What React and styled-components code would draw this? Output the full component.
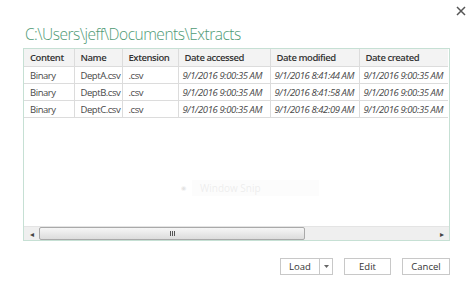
import styled, { createGlobalStyle } from "styled-components";

const GlobalStyle = createGlobalStyle`
  html, body {
    margin: 0;
    padding: 0;
    background: #ffffff;
  }
  body {
    font-family: "Open Sans", "Noto Sans", sans-serif;
    color: #444;
  }
`;

const rows = [
  { content: "Binary", name: "DeptA.csv", ext: ".csv", accessed: "9/1/2016 9:00:35 AM", modified: "9/1/2016 8:41:44 AM", created: "9/1/2016 9:00:35 AM" },
  { content: "Binary", name: "DeptB.csv", ext: ".csv", accessed: "9/1/2016 9:00:35 AM", modified: "9/1/2016 8:41:58 AM", created: "9/1/2016 9:00:35 AM" },
  { content: "Binary", name: "DeptC.csv", ext: ".csv", accessed: "9/1/2016 9:00:35 AM", modified: "9/1/2016 8:42:09 AM", created: "9/1/2016 9:00:35 AM" },
];

const columns = [
  { key: "content", label: "Content", width: 50 },
  { key: "name", label: "Name", width: 48 },
  { key: "ext", label: "Extension", width: 56 },
  { key: "accessed", label: "Date accessed", width: 92, italic: true },
  { key: "modified", label: "Date modified", width: 89, italic: true },
  { key: "created", label: "Date created", width: 89, italic: true },
];

const App = () => {
  return (
    <>
      <GlobalStyle />
      <Dialog>
        <TopBar>
          <CloseButton aria-label="Close">
            <svg width="10" height="10" viewBox="0 0 10 10">
              <path d="M1 1 L9 9 M9 1 L1 9" stroke="#555" strokeWidth="1.5" />
            </svg>
          </CloseButton>
        </TopBar>
        <Title>C:\Users\jeff\Documents\Extracts</Title>
        <Grid>
          <TableArea>
            <Table>
              <colgroup>
                {columns.map((c) => (
                  <col key={c.key} style={{ width: c.width }} />
                ))}
              </colgroup>
              <thead>
                <tr>
                  {columns.map((c) => (
                    <HeadCell key={c.key}>{c.label}</HeadCell>
                  ))}
                </tr>
              </thead>
              <tbody>
                {rows.map((r, i) => (
                  <tr key={i}>
                    {columns.map((c) => (
                      <Cell key={c.key} $italic={c.italic}>
                        {r[c.key]}
                      </Cell>
                    ))}
                  </tr>
                ))}
              </tbody>
            </Table>
            <Snip>
              <SnipIcon>◉</SnipIcon>
              <SnipBox>Window Snip</SnipBox>
            </Snip>
          </TableArea>
          <ScrollBar>
            <Arrow>◂</Arrow>
            <Track>
              <Thumb>
                <Grip />
              </Thumb>
            </Track>
            <Arrow>▸</Arrow>
          </ScrollBar>
        </Grid>
        <Footer>
          <SplitButton>
            <ButtonMain>Load</ButtonMain>
            <ButtonDrop>
              <svg width="5" height="3" viewBox="0 0 5 3">
                <path d="M0 0 L5 0 L2.5 3 Z" fill="#666" />
              </svg>
            </ButtonDrop>
          </SplitButton>
          <Button $w={47}>Edit</Button>
          <Button $w={48}>Cancel</Button>
        </Footer>
      </Dialog>
    </>
  );
};

export default App;

const Dialog = styled.div`
  width: 474px;
  height: 299px;
  box-sizing: border-box;
  padding: 0 24px 0 23px;
  display: flex;
  flex-direction: column;
`;

const TopBar = styled.div`
  height: 22px;
  display: flex;
  justify-content: flex-end;
  align-items: center;
  margin-right: -19px;
`;

const CloseButton = styled.div`
  width: 16px;
  height: 16px;
  display: flex;
  align-items: center;
  justify-content: center;
`;

const Title = styled.div`
  font-family: "Open Sans", sans-serif;
  font-weight: 300;
  font-size: 15.5px;
  line-height: 24px;
  height: 26px;
  color: #4f9a75;
  margin-left: 2px;
  letter-spacing: -0.5px;
  white-space: nowrap;
`;

const Grid = styled.div`
  width: 427px;
  height: 193px;
  box-sizing: border-box;
  border: 1px solid #c6e0d4;
  display: flex;
  flex-direction: column;
`;

const TableArea = styled.div`
  flex: 1;
  position: relative;
  overflow: hidden;
`;

const Table = styled.table`
  border-collapse: collapse;
  table-layout: fixed;
  width: 424px;
  font-size: 9.5px;
  letter-spacing: -0.45px;
`;

const HeadCell = styled.th`
  background: #f3f3f3;
  text-align: left;
  font-weight: 600;
  color: #333;
  height: 17px;
  padding: 0 0 0 6px;
  border-left: 1px solid #dcdcdc;
  border-bottom: 1px solid #dcdcdc;
  white-space: nowrap;
  overflow: hidden;
  &:first-child {
    border-left: none;
  }
`;

const Cell = styled.td`
  height: 16px;
  padding: 0 0 0 ${(p) => (p.$italic ? 4 : 6)}px;
  color: #484848;
  font-style: ${(p) => (p.$italic ? "italic" : "normal")};
  letter-spacing: ${(p) => (p.$italic ? "-0.4px" : "-0.45px")};
  border-left: 1px solid #dcdcdc;
  border-bottom: 1px solid #dcdcdc;
  white-space: nowrap;
  overflow: hidden;
  &:first-child {
    border-left: none;
  }
`;

const Snip = styled.div`
  position: absolute;
  left: 157px;
  top: 131px;
  display: flex;
  align-items: center;
  gap: 6px;
  opacity: 0.4;
`;

const SnipIcon = styled.span`
  font-size: 6px;
  color: #bbb;
`;

const SnipBox = styled.span`
  font-size: 10px;
  color: #d4d4d4;
  background: #fafafa;
  padding: 1px 58px 1px 8px;
`;

const ScrollBar = styled.div`
  height: 13px;
  display: flex;
  align-items: stretch;
  background: #efefef;
  border-top: 1px solid #e4e4e4;
`;

const Arrow = styled.div`
  width: 15px;
  display: flex;
  align-items: center;
  justify-content: center;
  font-size: 8px;
  color: #444;
`;

const Track = styled.div`
  flex: 1;
  display: flex;
  align-items: stretch;
`;

const Thumb = styled.div`
  width: 266px;
  box-sizing: border-box;
  border: 1px solid #a9a9a9;
  border-radius: 2px;
  background: linear-gradient(#f6f6f6, #dcdcdc);
  display: flex;
  align-items: center;
  justify-content: center;
`;

const Grip = styled.div`
  width: 5px;
  height: 5px;
  background: repeating-linear-gradient(90deg, #555 0 1px, transparent 1px 2px);
`;

const Footer = styled.div`
  display: flex;
  justify-content: flex-end;
  gap: 11px;
  margin-top: 17px;
`;

const SplitButton = styled.div`
  display: flex;
  height: 17px;
  border: 1px solid #c8c8c8;
  box-sizing: border-box;
  background: #fff;
`;

const ButtonMain = styled.div`
  width: 38px;
  display: flex;
  align-items: center;
  justify-content: center;
  font-size: 9.5px;
  color: #333;
  border-right: 1px solid #c8c8c8;
`;

const ButtonDrop = styled.div`
  width: 12px;
  display: flex;
  align-items: center;
  justify-content: center;
`;

const Button = styled.div`
  width: ${(p) => p.$w}px;
  height: 17px;
  box-sizing: border-box;
  border: 1px solid #c8c8c8;
  background: #fff;
  display: flex;
  align-items: center;
  justify-content: center;
  font-size: 9.5px;
  color: #333;
`;
